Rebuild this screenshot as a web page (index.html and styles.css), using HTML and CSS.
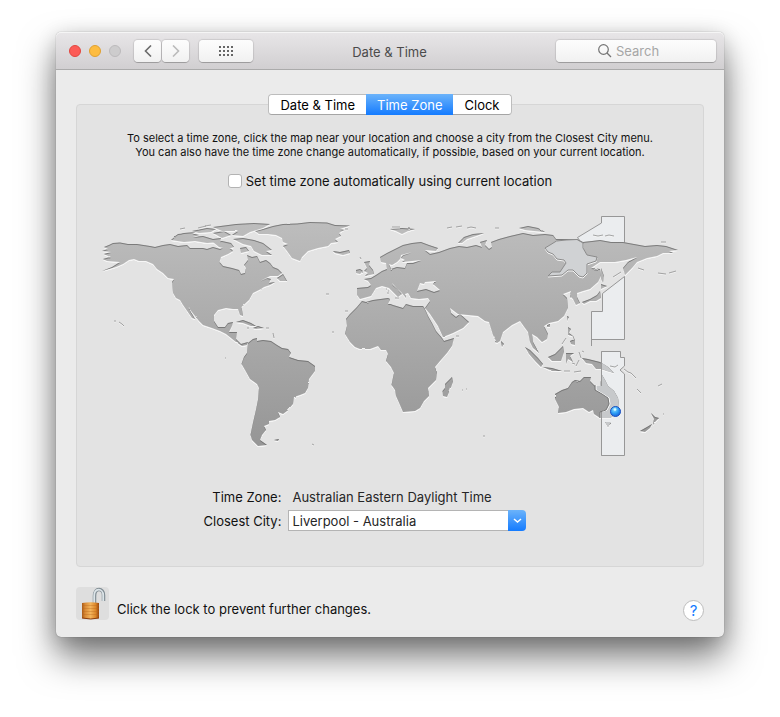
FILE: index.html
```html
<!DOCTYPE html>
<html lang="en">
<head>
  <meta charset="UTF-8">
  <title>Date &amp; Time</title>
  <meta name="viewport" content="width=device-width,initial-scale=1">
  <link rel="stylesheet" href="styles.css">
</head>
<body>
  <main class="window">
    <header class="titlebar">
      <div class="toolbar">
        <div class="lights">
          <button type="button" class="light close" aria-label="Close"></button>
          <button type="button" class="light minimize" aria-label="Minimize"></button>
          <button type="button" class="light zoom" aria-label="Zoom" disabled></button>
        </div>
        <div class="nav">
          <button type="button" class="tool" aria-label="Back">
            <svg width="8" height="12" viewBox="0 0 8 12"><path d="M7 .5 1.500 6 7 11.500"/></svg>
          </button>
          <button type="button" class="tool" aria-label="Forward" disabled>
            <svg width="8" height="12" viewBox="0 0 8 12"><path d="M1 .5 6.500 6 1 11.500"/></svg>
          </button>
        </div>
        <button type="button" class="tool tool-all" aria-label="Show all">
          <svg width="14" height="10" viewBox="0 0 14 10"><path class="dots" d="M0 1h14M0 5h14M0 9h14"/></svg>
        </button>
      </div>
      <h1>Date &amp; Time</h1>
      <div class="search">
        <svg width="14" height="14" viewBox="0 0 14 14"><circle cx="5.500" cy="5.500" r="4.800"/><path d="m9 9 4 4"/></svg>
        <input type="text" placeholder="Search" aria-label="Search">
      </div>
    </header>

    <section class="panel">
      <nav class="tabs">
        <button type="button">Date &amp; Time</button>
        <button type="button" class="active">Time Zone</button>
        <button type="button">Clock</button>
      </nav>
      <p class="hint">
        To select a time zone, click the map near your location and choose a city from the Closest City menu.<br>
        You can also have the time zone change automatically, if possible, based on your current location.
      </p>
      <label class="auto"><input type="checkbox"> Set time zone automatically using current location</label>

      <svg class="map" viewBox="94 210 592 252" role="img" aria-label="World map">
        <defs>
          <linearGradient id="land" gradientUnits="userSpaceOnUse" x1="0" y1="222" x2="0" y2="446">
            <stop offset="0" stop-color="#bdbdbd"/>
            <stop offset="1" stop-color="#969696"/>
          </linearGradient>
          <radialGradient id="pin" cx=".4" cy=".3" r=".8">
            <stop offset="0" stop-color="#8fe4ff"/>
            <stop offset=".5" stop-color="#2c9cf5"/>
            <stop offset="1" stop-color="#1452cf"/>
          </radialGradient>
          <!-- uneven coast, dark upper edge inside, light lower edge outside -->
          <filter id="emboss" filterUnits="userSpaceOnUse" x="94" y="210" width="592" height="252" color-interpolation-filters="sRGB">
            <feTurbulence type="fractalNoise" baseFrequency="0.15" numOctaves="1" seed="4" result="noise"/>
            <feDisplacementMap in="SourceGraphic" in2="noise" scale="2" xChannelSelector="R" yChannelSelector="G" result="shape"/>
            <feOffset in="shape" dx="0.300" dy="1" result="low"/>
            <feFlood flood-color="#666" flood-opacity=".75"/>
            <feComposite operator="in" in2="shape"/>
            <feComposite operator="out" in2="low" result="edge"/>
            <feGaussianBlur in="shape" stdDeviation="0.700"/>
            <feOffset dx="0.300" dy="0.800"/>
            <feComponentTransfer result="fat">
              <feFuncA type="linear" slope="2"/>
            </feComponentTransfer>
            <feFlood flood-color="#f6f6f6"/>
            <feComposite operator="in" in2="fat" result="glow"/>
            <feMerge>
              <feMergeNode in="glow"/>
              <feMergeNode in="shape"/>
              <feMergeNode in="edge"/>
            </feMerge>
          </filter>
        </defs>

        <g class="zone">
          <path d="M577.500 237.500 601.500 223V216.500H624.500V245H583Z"/>
          <path d="M624.500 276.500V339.500H591.500V311.500H602.500V293.500Z"/>
          <path d="M591.500 339V346"/>
          <path d="M601.500 351.500H620.500V357.500H624.500V366L620 370 624.500 374V455.500H601.500Z"/>
        </g>

        <g class="land" filter="url(#emboss)">
          <!-- North America -->
          <path d="M102 251 108 249 104 247 109 245 113 243 120 242.500 128 244 137 244 150 246 155 247 163 245 170 244 178 246 187 245 190 248 203 248 207 249 213 247 220 249 226 246 231 249 233 251 228 254 221 257 219.500 262 223 266 232 268 239 270 241 274 245 273 246 268 244 265 248 260 247 255 252 257 257 256 260 262 266 260 270 263 273 267 278 269 282 273 278 276 270 276 260 281 267 278 271 279 269 283 275 282 270 285 264 287 261 289 253 293 249 300 241.500 307 243 316 240 315 238 309 233 309 226 308 218 310 214 315 214 321 218 327 225 327 228 323 233 322 232 326 229 332 237 332 236 339 241 344 248 342 247 345 242 346 236 342 231 338 226 334 220 331 212 328 203 325 199 321 188 307 195 319 192 318 183 305 180 300 176 298 173 293 172 282 174 279 168 278 163 273 157 269 153 264 146 261 139 261 134 259 129 260 123 264 116 267 102 271 112 267 120 262 107 261 103 259 110 257 104 254 111 252Z"/>
          <!-- Arctic islands -->
          <path d="M171 240 178 234 190 233 199 235 193 237 203 236 213 239 221 238 220 242 207 243 195 241 184 242Z"/>
          <path d="M175 236 184 233 196 232 190 235Z"/>
          <path d="M192 231 207 228 216 229 211 232 199 233Z"/>
          <path d="M213 233 224 231 231 235 222 238Z"/>
          <path d="M213 227 236 224 254 223 270 224 263 228 250 232 243 236 232 235 238 231 222 231Z"/>
          <path d="M213 242 222 241 231 243 234 247 228 249 219 247Z"/>
          <path d="M233 239 243 238 254 240 263 243 272 250 266 251 272 255 262 255 254 251 251 246 243 244Z"/>
          <path d="M240 248 246 247 249 251 241 253Z"/>
          <!-- Greenland, Iceland, Newfoundland -->
          <path d="M255 231 263 229 273 226 283 224 297 223.500 310 222 327 222.500 335 225 350 225.500 340 229 344 230 339 233 341 236 335 239 338 242 331 243 328 246 318 248 308 251 302 257 300 261 292 258 287 251 283 246 288 244 283 242 282 238 276 235 268 234 259 234Z"/>
          <path d="M333 251 340 252 349 250 350 253 343 255 335 253Z"/>
          <path d="M277 278 283 274 287 281 280 281Z"/>
          <!-- Caribbean -->
          <path d="M236 322 243 320 251 323 256 326 251 326 243 323Z"/>
          <path d="M253 328 258 326 264 328 256 329Z"/>
          <!-- South America -->
          <path d="M248 343 253 339 257 338 257 341 263 340 271 341 277 345 282 348 288 349 291 353 289 357 298 360 308 361 315 366 315 371 309 379 308 388 305 393 300 395 294 397 293 404 287 411 283 414 278 412 280 417 275 420 269 421 269 424 264 426 266 430 262 435 260 440 267 445 258 446 252 440 250.500 435 253 423 256 410 258 400 259 388 257 384 250 379 245 370 241.500 364 244 357 247 353Z"/>
          <path d="M274 440 279 439 278 441Z"/>
          <!-- Africa -->
          <path d="M357 307 362 301 366 302 373 300 388 298 390 299 388 303 393 305 403 308 406 304 413 306 423 306 425 309 428 316 432 323 436 331 442 338 444 341 454 338 452 346 447 353 440 361 435 367 437 373 436 380 428 388 429 396 424 401 420 408 415 411 403 412 400 405 396 396 395 390 391.500 385 394 373 391 367 386 361 388 354 386 350 381 350 378 346 370 349 360 349 355 347 350 342 345 334 347 326 346 319 350 314Z"/>
          <path d="M452 377 453 382 450 390 447 397 443 396 442.500 391 445 388 445 384Z"/>
          <!-- Europe and Asia; the inner rings are the Baltic and the Black Sea -->
          <path fill-rule="evenodd" d="M357 288 368 287 371 285 368 281 364 279 371 278 376 275 382 271 387 269 386 263 381 262 380 257 387 253 395 249 403 245 412 243 421 242 429 245 438 248 436 251 425 250 430 254 439 252 450 248 459 246 467 247 476 245 482 247 480 242 487 240 485 245 489 249 492 247 491 242 499 239 510 236 523 233 533 235 545 234 553 235 556 239 566 239 577 239 583 242 592 241 600 240 611 242 623 242 634 244 645 246 657 245 666 246 678 250 669 251 673 253 663 253 657 256 647 258 637 262 632 268 625 275 623 268 628 262 637 257 626 260 615 262 600 262 591 268 600 269 601 276 598 282 590 289 583 291 577 293 577 297 580 303 576 305 573 299 570 296 571 291 563 294 567 298 568 308 564 316 558 321 549 323 544 326 548 334 547 339 542 342 537 337 532 334 533 342 539 353 533 348 530 342 528 332 525 328 520 321 512 325 503 332 500 341 497 343 493 335 489 322 485 321 478 316 468 315 458 314 450 308 451 313 456 317 460 314 469 322 463 328 453 333 443 337 438 326 430 314 425 308 430 301 428 298 419 299 411 298 408 293 405 294 406 298 401 292 393 285 392 283 402 294 398 297 389 288 382 286 376 288 371 296 360 299 357 295Z
            M412 252 403 255 401 258 405 260 402 262 412 261 421 260 413 263 407 263 405 268 397 267 391 269 389 264 392 265 397 262 400 259 401 255Z
            M417 291 420 283 424 284 425 282 436 281 433 284 440 290 434 292 426 289Z"/>
          <path d="M364 262 370 261 369 265 373 270 374 274 365 276 368 273 364 271 367 268Z"/>
          <path d="M356 270 360 269 363 271 360 274 356 273Z"/>
          <!-- Svalbard and the Arctic coast -->
          <path d="M390 229 402 228 415 229 408 231 402 234 396 231Z"/>
          <path d="M458 243 464 237 473 234 484 233 476 236 467 239 462 243Z"/>
          <path d="M519 228 528 226 538 228 545 232 534 231 525 230Z"/>
          <!-- Japan, Sakhalin, Philippines -->
          <path d="M601 268 604 276 603 283 601 279Z"/>
          <path d="M601 284 607 286 601 289Z"/>
          <path d="M600 291 601 298 596 301 590 301 584 304 582 302 590 299 597 295Z"/>
          <path d="M567 316 569 317 567 321Z"/>
          <path d="M547 325 550 324 550 327 547 327Z"/>
          <path d="M568 327 571 329 569 333 573 336 568 335Z"/>
          <path d="M570 341 575 339 575 345 571 344Z"/>
          <path d="M501 341 504 344 502 347 501 344Z"/>
          <!-- Indonesia and New Guinea -->
          <path d="M525 347 530 350 538 358 543 364 541 367 536 362 529 354Z"/>
          <path d="M543 367 552 368 562 371 552 371Z"/>
          <path d="M548 357 555 354 563 346 564 352 561 361 552 361Z"/>
          <path d="M566 353 574 353 570 356 573 362 568 359 566 364Z"/>
          <path d="M582 358 588 359 592 360 600 362 608 367 614 373 607 371 601 369 596 369 592 364 586 363Z"/>
          <!-- Australia -->
          <path d="M555 394 562 390 568 388 572 382 575 380 580 381 584 377 591 377 590 381 595 386 600 386 602 375 605 380 608 386 614 391 618 398 619 406 615 415 610 418 600 418 594 414 593 410 589 412 583 408 574 409 566 412 558 413 559 407 555 399Z"/>
          <path d="M605 422 611 422 608 427Z"/>
          <!-- New Zealand -->
          <path d="M651 413 655 417 659 418 655 422 653 425 654 419Z"/>
          <path d="M652 424 650 428 645 432 640 431 647 427Z"/>
        </g>

        <!-- small islands -->
        <g class="isles">
          <path d="M247 328h2M266 328h3M273 333l1 5M119 322l3 2 2 2M114 321h2M312 444l2 1M225 358h1M332 332h2"/>
          <path d="M388 291h1M386 289h1M387 293h2M395 298h4M326 294h3M345 311h3M456 336h3"/>
          <path d="M447 228l5-1M456 227l6-1M467 228l4-1 5 1M495 228h4M593 235l5 1 5-1M605 236l4-1 5 1M661 242h5"/>
          <path d="M180 229l5-1M198 228l8-2M205 226l6-1M392 227h8M360 257l1 2M345 229h3"/>
          <path d="M566 338l-4 6M573 336l1 3M613 277l8-5M658 273l8 1M669 273l7-2M638 268l6 2"/>
          <path d="M564 371h6M574 372l7-1M576 366l3-6M572 363l3 1M579 352l2 6M582 351l2 1"/>
          <path d="M610 366l5 1 3-2M624 369l4 3 3 1 5 5M637 389l4 4M658 386l4-2M663 414h1M483 436h2M462 390h1M466 389h1"/>
        </g>

        <!-- selected zone over land -->
        <path class="zone-land" d="M556.500 241 566 240 577 239.500 583 243 583 248 587 255 597 257 596 261 587 264 587 273 583 277 579 276 573 270 568 270 562 275 548 276 552 272 560 272 566 263 564 260 557 259 553 254 548 252 545 248 550 245Z"/>
        <path class="tint" d="M602 375 605 380 608 386 614 391 618 398 619 406 615 415 610 418H600V412L606 410 609 404 608 398 602 394 596 390 595 386 600 386ZM602 363 608 367 614 373 607 371 602 369ZM605 422 611 422 608 427Z"/>
        <path class="border" d="M595 385V390L602 394 608 398 609 404 606 410 600 412V418"/>
        <path class="edge" d="M601.500 351.500V386M601.500 412V455.500M624.500 238V242"/>
        <circle class="pin" cx="615.500" cy="411.500" r="5"/>
        <circle cx="615" cy="409.500" r="1.300" fill="#d9f8ff"/>
      </svg>

      <div class="fields">
        <span>Time Zone:</span>
        <output>Australian Eastern Daylight Time</output>
        <label for="city">Closest City:</label>
        <div class="combo">
          <input type="text" id="city" value="Liverpool - Australia">
          <button type="button" aria-label="Show cities">
            <svg width="9" height="6" viewBox="0 0 9 6"><path d="m1 1 3.500 3L8 1"/></svg>
          </button>
        </div>
      </div>
    </section>

    <footer>
      <button type="button" class="lock" id="lock" aria-label="Lock">
        <svg width="33" height="33" viewBox="0 0 33 33">
          <defs>
            <linearGradient id="brass">
              <stop offset="0" stop-color="#a85a18"/>
              <stop offset=".18" stop-color="#d98a35"/>
              <stop offset=".5" stop-color="#f3b45c"/>
              <stop offset=".8" stop-color="#dc8729"/>
              <stop offset="1" stop-color="#98460c"/>
            </linearGradient>
          </defs>
          <path d="M18.500 17V9C18.500 0 27.500 1 27.500 8V14" fill="none" stroke="#7f8b92" stroke-width="3.500"/>
          <path d="M18.200 17V9C18.200 .5 27 1 27.200 8V14" fill="none" stroke="#dce4e8" stroke-width="1.800"/>
          <path d="M6 16Q15 14.500 23 16V31Q15 33 6 31Z" fill="url(#brass)"/>
          <path d="M6 18.500h17M6 21.500h17M6 24.500h17M6 27.500h17" stroke="#b9661c" stroke-width="1" opacity=".35"/>
          <path d="M6 31Q15 33 23 31" fill="none" stroke="#8c3d0b"/>
        </svg>
      </button>
      <label for="lock">Click the lock to prevent further changes.</label>
      <button type="button" class="help" aria-label="Help">?</button>
    </footer>
  </main>
</body>
</html>
```

FILE: styles.css
```css
* {
  box-sizing: border-box;
}
body,
button,
input {
  font-family: Inter, "Liberation Sans", sans-serif;
  font-size: 13px;
}
body {
  margin: 0;
  padding: 32px 56px 80px;
  background: #fff;
  color: #111;
}
button {
  padding: 0;
  border: none;
}
svg {
  display: block;
}
.window {
  border-radius: 5px;
  background: #ebebeb;
  box-shadow: 0 0 1px rgba(0,0,0,0.5), 0 20px 36px rgba(0,0,0,0.52), 0 4px 20px rgba(0,0,0,0.16);
}

.titlebar {
  display: grid;
  grid-template-columns: 1fr auto 1fr;
  align-items: center;
  height: 38px;
  padding: 0 8px 0 13px;
  border-bottom: 1px solid #ababab;
  border-radius: 5px 5px 0 0;
  background: linear-gradient(#e8e6e8, #d1cfd1);
  box-shadow: inset 0 1px #f5f5f5;
}
.toolbar,
.lights,
.nav {
  display: flex;
  align-items: center;
}
.lights {
  gap: 8px;
  margin-right: 13px;
}
.light {
  width: 12px;
  height: 12px;
  border: 1px solid #bcbabc;
  border-radius: 50%;
  background: #cdcccd;
}
.close {
  border-color: #e2463f;
  background: #fc5b57;
}
.minimize {
  border-color: #e0a030;
  background: #fdbc40;
}
.nav {
  gap: 1px;
  margin-right: 10px;
}
.tool {
  display: flex;
  align-items: center;
  justify-content: center;
  width: 27px;
  height: 22px;
  border-radius: 4px;
  background: linear-gradient(#fdfdfd, #f1f1f1);
  box-shadow: 0 0 1px 1px rgba(0,0,0,0.1), 0 1px rgba(0,0,0,0.18);
}
.tool path {
  fill: none;
  stroke: #6b6b6b;
  stroke-width: 1.6;
}
.tool:disabled path {
  stroke: #bbb;
}
.tool-all {
  width: 54px;
}
.tool .dots {
  stroke: #666;
  stroke-width: 2;
  stroke-dasharray: 2 2;
}
h1 {
  margin: 0;
  padding: 3px 6px 0 0;
  color: #4b4b4b;
  font-size: 13px;
  font-weight: 400;
}
.search {
  position: relative;
  justify-self: end;
  width: 160px;
}
.search svg {
  position: absolute;
  top: 4px;
  left: 42px;
  fill: none;
  stroke: #737373;
  stroke-width: 1.2;
}
.search input {
  display: block;
  width: 100%;
  height: 22px;
  padding: 0 4px 0 60px;
  border: none;
  border-radius: 4px;
  background: linear-gradient(#fdfdfd, #f1f1f1);
  box-shadow: 0 0 1px 1px rgba(0,0,0,0.1), 0 1px rgba(0,0,0,0.18);
}
.search input::placeholder {
  color: #a6a6a6;
}

.panel {
  display: flex;
  flex-direction: column;
  align-items: center;
  margin: 34px 20px 0;
  padding: 0 17px 35px;
  border: 1px solid #d6d6d6;
  border-radius: 4px;
  background: #e3e3e3;
}
.tabs {
  display: flex;
  height: 21px;
  margin-top: -11px;
  border: 1px solid #bdbdbd;
  border-bottom-color: #a5a5a5;
  border-radius: 4px;
  background: #fff;
}
.tabs button {
  padding: 0 11px;
  border-radius: 4px;
  background: #fff;
  color: #000;
}
.tabs .active {
  margin: -1px 0;
  border-radius: 0;
  background: linear-gradient(#6bb3fa, #147bff);
  color: #fff;
}
.hint {
  margin: 16px 0 13px;
  font-size: 11px;
  line-height: 14px;
  text-align: center;
}
.auto {
  display: flex;
  align-items: center;
  gap: 4px;
  height: 18px;
}
.auto input {
  appearance: none;
  width: 14px;
  height: 14px;
  margin: 0;
  border: 1px solid #b3b3b3;
  border-radius: 3px;
  background: #fff;
}

.map {
  width: 100%;
  height: auto;
  margin-top: 20px;
}
.land path {
  fill: url(#land);
}
.isles {
  fill: none;
  stroke: #929292;
  stroke-width: 0.8;
  filter: drop-shadow(0 1px 0 #f4f4f4);
}
.zone {
  fill: #ebedef;
  stroke: #979797;
}
.zone-land {
  fill: #d0d2d4;
  stroke: #8b8b8b;
  filter: drop-shadow(0 1px 0 #f4f4f4);
}
.tint {
  fill: #c7c9cb;
}
.border {
  fill: none;
  stroke: #777;
  filter: drop-shadow(1px 0 0 #fff);
}
.edge {
  fill: none;
  stroke: #979797;
}
.pin {
  fill: url(#pin);
  stroke: #1b4fc0;
}

.fields {
  display: grid;
  grid-template-columns: auto minmax(0, 238px);
  column-gap: 7px;
  align-items: center;
  margin-top: 25px;
  padding-right: 50px;
  line-height: 20px;
}
.fields > span,
.fields > label {
  text-align: right;
}
.fields label {
  padding-top: 4px;
}
.fields output {
  padding-left: 4px;
  color: #262626;
}
.combo {
  display: flex;
  height: 21px;
  margin-top: 3px;
}
.combo input {
  flex: 1;
  min-width: 0;
  padding: 0 3px;
  border: 1px solid #b4b4b4;
  border-right: none;
  background: #fff;
  color: #262626;
}
.combo button {
  display: flex;
  align-items: center;
  justify-content: center;
  width: 18px;
  border-radius: 0 4px 4px 0;
  background: linear-gradient(#6bb3fa, #147bff);
}
.combo path {
  fill: none;
  stroke: #fff;
  stroke-width: 1.5;
}

footer {
  display: flex;
  align-items: flex-start;
  padding: 20px 20px 16px;
}
footer label {
  padding: 14px 0 0 8px;
}
.lock {
  border-radius: 4px;
  background: #dedede;
}
.help {
  width: 21px;
  height: 21px;
  margin: 13px 0 0 auto;
  border: 1px solid #bdbdbd;
  border-radius: 50%;
  background: #fff;
  color: #147bff;
  font-size: 15px;
}
```
